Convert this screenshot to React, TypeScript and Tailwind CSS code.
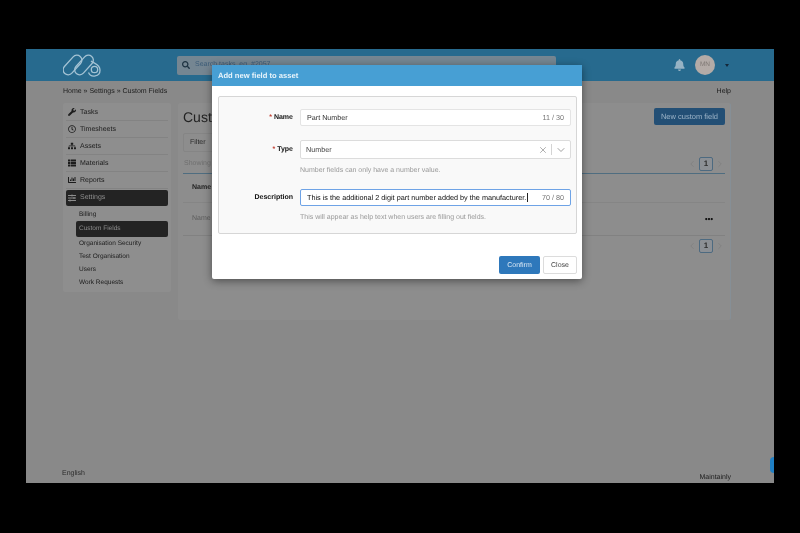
import { ChevronDown, ChevronLeft, ChevronRight, X } from 'lucide-react';
import { FaBell, FaChartBar, FaRegClock, FaSearch, FaSitemap, FaSlidersH, FaThList, FaWrench, FaEllipsisH } from 'react-icons/fa';

const navItems = [
  { label: 'Tasks', icon: FaWrench },
  { label: 'Timesheets', icon: FaRegClock },
  { label: 'Assets', icon: FaSitemap },
  { label: 'Materials', icon: FaThList },
  { label: 'Reports', icon: FaChartBar },
];

const subItems = ['Billing', 'Custom Fields', 'Organisation Security', 'Test Organisation', 'Users', 'Work Requests'];

function Logo() {
  return (
    <svg width="38" height="23" viewBox="0 0 38 23" fill="none" stroke="#a4c3d4" strokeWidth="1.3">
      <rect x="-2" y="6" width="23" height="10" rx="5" transform="rotate(-48 9.5 11)" />
      <rect x="9.5" y="6" width="23" height="10" rx="5" transform="rotate(-48 21 11)" />
      <path d="M28 7 C31 9.5 37 10.5 37 16 A6 6 0 0 1 25.5 18.5" />
      <circle cx="31.5" cy="15.5" r="3.2" />
    </svg>
  );
}

function Pager() {
  return (
    <div className="flex items-center gap-[2px] text-[#7f7f7f]">
      <ChevronLeft className="w-2.5 h-2.5" />
      <span className="w-[14px] h-[14px] flex items-center justify-center border border-[#4d6a80] rounded-[2px] text-[8px] font-bold text-[#2f2f2f] bg-[#8c9095]">1</span>
      <ChevronRight className="w-2.5 h-2.5" />
    </div>
  );
}

function Sidebar() {
  return (
    <div className="w-[108px] h-[189px] shrink-0 bg-[#8e8e8e] rounded-[2px] px-[3px] py-[1px] text-[7px] text-[#1c1c1c]">
      {navItems.map(({ label, icon: Icon }) => (
        <div key={label} className="h-[17px] flex items-center gap-[4px] pl-[2px] border-b border-[#838383]">
          <Icon className="w-2 h-2" />
          <span className="pt-[2px]">{label}</span>
        </div>
      ))}
      <div className="h-[16px] mt-[1px] flex items-center gap-[4px] pl-[2px] bg-[#232323] rounded-[2px] text-[#8d8d8d]">
        <FaSlidersH className="w-2 h-2" />
        <span className="pt-[1px]">Settings</span>
      </div>
      <div className="pl-[10px] mt-[2px] text-[6.5px]">
        {subItems.map((item) =>
          item === 'Custom Fields' ? (
            <div key={item} className="h-[16px] pl-[3px] flex items-center bg-[#232323] rounded-[2px] text-[#8d8d8d]">{item}</div>
          ) : (
            <div key={item} className="h-[13px] pl-[3px] flex items-center">{item}</div>
          ),
        )}
      </div>
    </div>
  );
}

function MainPanel() {
  return (
    <div className="w-[553px] h-[217px] ml-[7px] bg-[#8d8d8d] border-r border-[#868f96] rounded-[2px] px-[5px] pt-[5px]">
      <div className="flex items-center justify-between h-[17px]">
        <span className="pt-[1px] text-[14px] text-[#222]">Custom Fields</span>
        <span className="h-[17px] w-[71px] pt-[1px] flex items-center justify-center bg-[#234f75] rounded-[2px] text-[7.5px] text-[#9db4c8]">New custom field</span>
      </div>
      <div className="mt-[8px] w-[40px] h-[19px] flex items-center pl-[6px] pt-[1px] border border-[#858585] rounded-[2px] text-[7px] text-[#2a2a2a]">Filter</div>
      <div className="mt-[3px] h-[19px] flex items-center justify-between border-b border-[#4f6d80] text-[7px] text-[#6f6f6f]">
        <span className="pl-[1px]">Showing</span>
        <Pager />
      </div>
      <div className="h-[29px] flex items-center px-[9px] pt-[1px] border-b border-[#858585] text-[7px] font-bold text-[#222]">Name</div>
      <div className="h-[33px] flex items-center justify-between px-[9px] pr-[12px] border-b border-[#818181] text-[7px] text-[#5c5c5c]">
        <span>Name</span>
        <FaEllipsisH className="w-2 h-2 text-[#111]" />
      </div>
      <div className="flex justify-end mt-[3px]">
        <Pager />
      </div>
    </div>
  );
}

function Modal() {
  return (
    <div className="absolute left-[186px] top-[16px] w-[370px] h-[214px] bg-white rounded-[2px] shadow-[0_2px_8px_rgba(0,0,0,0.45)]">
      <div className="h-[21px] flex items-center px-[6px] bg-[#479fd4] text-[7.6px] font-bold text-[#e8f4fb]">Add new field to asset</div>
      <div className="ml-[6px] mr-[5px] mt-[10px] h-[138px] bg-[#f9f9f9] border border-[#d6d6d6] rounded-[2px] pr-[5px]">
        <div className="flex mt-[12px] items-center">
          <div className="w-[74px] pt-[2px] text-right text-[7px] font-bold text-[#111]"><span className="text-[#c0392b]">* </span>Name</div>
          <div className="ml-[7px] flex-1 h-[17px] flex items-center justify-between px-[6px] pt-[2px] bg-white border border-[#e4e4e4] rounded-[2px] text-[7.2px] text-[#333]">
            <span>Part Number</span>
            <span className="text-[#777]">11 / 30</span>
          </div>
        </div>
        <div className="flex mt-[14px] items-center">
          <div className="w-[74px] pt-[2px] text-right text-[7px] font-bold text-[#111]"><span className="text-[#c0392b]">* </span>Type</div>
          <div className="ml-[7px] flex-1 h-[19px] flex items-center justify-between pl-[5px] pr-[3px] bg-white border border-[#dcdcdc] rounded-[2px] text-[7.2px] text-[#444]">
            <span className="pt-[2px]">Number</span>
            <span className="flex items-center gap-[3px] text-[#a0a0a0]">
              <X className="w-2.5 h-2.5" />
              <span className="w-px h-[11px] bg-[#d4d4d4]" />
              <ChevronDown className="w-3 h-3" />
            </span>
          </div>
        </div>
        <div className="ml-[81px] mt-[7px] text-[7px] text-[#999]">Number fields can only have a number value.</div>
        <div className="flex mt-[12px] items-center">
          <div className="w-[74px] pt-[2px] text-right text-[7px] font-bold text-[#111]">Description</div>
          <div className="ml-[7px] flex-1 h-[17px] flex items-center justify-between px-[6px] bg-white border border-[#6ea3e6] rounded-[2px] text-[7.27px] text-[#111] whitespace-nowrap">
            <span className="pt-[2px]">This is the additional 2 digit part number added by the manufacturer.<span className="ml-[1px] border-r border-[#222]" /></span>
            <span className="pt-[2px] text-[#777] text-[7.2px]">70 / 80</span>
          </div>
        </div>
        <div className="ml-[81px] mt-[7px] text-[7px] text-[#999]">This will appear as help text when users are filling out fields.</div>
      </div>
      <div className="flex justify-end gap-[3px] mt-[22px] mr-[5px]">
        <span className="w-[41px] h-[18px] pt-[2px] flex items-center justify-center bg-[#2e78bb] rounded-[2px] text-[7px] text-[#dbe9f5]">Confirm</span>
        <span className="w-[34px] h-[18px] pt-[2px] flex items-center justify-center bg-white border border-[#dcdcdc] rounded-[2px] text-[7px] text-[#444]">Close</span>
      </div>
    </div>
  );
}

export default function App() {
  return (
    <div className="w-[800px] h-[533px] bg-black pt-[49px] px-[26px] font-['Liberation_Sans',Arial,sans-serif] [text-rendering:geometricPrecision]">
      <div className="relative w-[748px] h-[434px] bg-[#898989] overflow-hidden flex flex-col blur-[0.25px]">
        <div className="h-[32px] shrink-0 flex items-center bg-[#276a8e] pl-[37px] pr-[45px]">
          <Logo />
          <div className="ml-[76px] w-[379px] h-[19px] flex items-center gap-[5px] pl-[5px] bg-[#758692] rounded-[2px] text-[7px] text-[#3c5c78]">
            <FaSearch className="w-2 h-2 text-[#1e3342]" />
            <span>Search tasks, eg. #2057</span>
          </div>
          <div className="ml-auto flex items-center">
            <FaBell className="w-[11px] h-[12px] text-[#97b3c4]" />
            <div className="ml-[10px] w-[20px] h-[20px] flex items-center justify-center rounded-full bg-[#b3aba7] text-[6.5px] text-[#7f7874]">MN</div>
            <span className="ml-[10px] w-0 h-0 border-x-[2px] border-x-transparent border-t-[3px] border-t-[#14283a]" />
          </div>
        </div>
        <div className="h-[22px] shrink-0 flex items-center justify-between pl-[37px] pr-[43px] text-[7px] text-[#1c1c1c]">
          <span>Home » Settings » Custom Fields</span>
          <span>Help</span>
        </div>
        <div className="flex pl-[37px]">
          <Sidebar />
          <MainPanel />
        </div>
        <div className="mt-auto flex justify-between pl-[36px] pr-[43px] text-[7px] text-[#1c1c1c]">
          <span className="mt-[2px] text-[#2b2b2b]">English</span>
          <span className="mt-[6px]">Maintainly</span>
        </div>
        <span className="absolute -right-[4px] top-[408px] w-[8px] h-[16px] rounded-full bg-[#1f7fc4]" />
        <Modal />
      </div>
    </div>
  );
}
